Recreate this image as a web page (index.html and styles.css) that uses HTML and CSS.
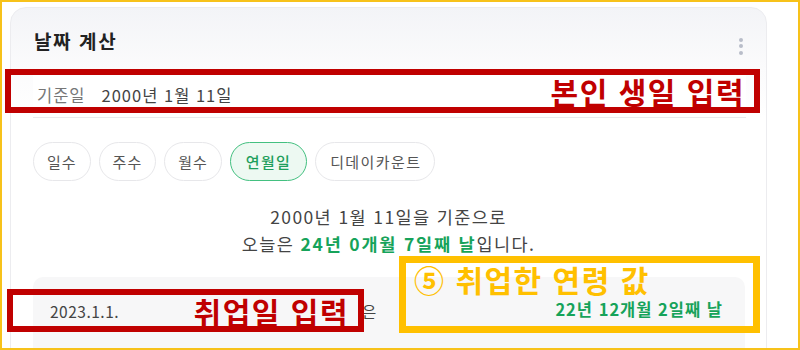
FILE: index.html
```html
<!DOCTYPE html>
<html lang="ko">
<head>
<meta charset="utf-8">
<link rel="stylesheet" href="styles.css">
</head>
<body>
<div class="frame">
  <div class="card">
    <div class="card-head">
      <h2 class="title">날짜 계산</h2>
      <span class="kebab"><i></i><i></i><i></i></span>
    </div>
    <div class="field">
      <span class="field-label">기준일</span>
      <span class="field-value">2000년 1월 11일</span>
    </div>
    <div class="chips">
      <span class="chip">일수</span>
      <span class="chip">주수</span>
      <span class="chip">월수</span>
      <span class="chip active">연월일</span>
      <span class="chip">디데이카운트</span>
    </div>
    <div class="result">
      <p>2000년 1월 11일을 기준으로</p>
      <p>오늘은 <b class="green">24년 0개월 7일째 날</b>입니다.</p>
    </div>
    <div class="sub">
      <div class="sub-row">
        <span class="sub-date">2023.1.1.</span>
        <span class="sub-eun">은</span>
        <b class="green sub-val">22년 12개월 2일째 날</b>
      </div>
    </div>
  </div>

  <div class="note red note-birth"><span>본인 생일 입력</span></div>
  <div class="note red note-job"><span>취업일 입력</span></div>
  <div class="note yellow note-age"><span>⑤ 취업한 연령 값</span></div>
</div>
</body>
</html>
```

FILE: styles.css
```css
* { box-sizing: border-box; }
html, body { margin: 0; padding: 0; background: #fff; }
body { font-family: "Noto Sans CJK KR", "Noto Sans", sans-serif; color: #333; }

.frame {
  position: relative;
  width: 800px;
  height: 350px;
  border: 2px solid #f7c21a;
  padding: 5px 0 0 8px;
  overflow: hidden;
  background: #fff;
}

.card {
  width: 757px;
  height: 400px;
  border: 1px solid #ececef;
  border-radius: 16px;
  background: linear-gradient(#f3f4f7 0px, #fbfbfc 60px, #ffffff 110px);
}

.card-head {
  display: flex;
  align-items: center;
  justify-content: space-between;
  height: 60px;
  padding: 4px 22px 0 23px;
}
.title {
  margin: 0;
  font-size: 19px;
  font-weight: 700;
  color: #222;
  letter-spacing: 1.6px;
}
.kebab {
  display: flex;
  flex-direction: column;
  gap: 2.5px;
  margin-top: 12px;
  margin-right: 1px;
}
.kebab i {
  display: block;
  width: 4px;
  height: 4px;
  border-radius: 50%;
  background: #b9bdc9;
}

.field {
  margin: 5px 20px 0 22px;
  height: 44px;
  display: flex;
  align-items: center;
  gap: 16px;
  padding-left: 4px;
  background: #fff;
  box-shadow: 0 1px 0 #e9e9ec;
  font-size: 16.5px;
  letter-spacing: 1px;
}
.field-label { color: #777; }
.field-value { color: #444; }

.chips {
  display: flex;
  gap: 8px;
  margin: 25px 0 0 22px;
}
.chip {
  height: 39px;
  padding: 0 13px;
  border: 1px solid #e7e7ea;
  border-radius: 20px;
  display: flex;
  align-items: center;
  font-size: 15px;
  letter-spacing: 1px;
  color: #555;
  background: #fff;
}
.chip.active {
  border: 1.5px solid #43c080;
  background: #edf9f2;
  color: #1e9f5c;
  font-weight: 500;
  padding: 0 15px;
  letter-spacing: 1.3px;
}
.chip:last-child { letter-spacing: 1.4px; padding: 0 13px 0 14px; }

.result {
  margin-top: 22px;
  text-align: center;
  font-size: 17.5px;
  line-height: 27px;
  letter-spacing: 1.4px;
  color: #444;
}
.result p { margin: 0; }
.result .green { letter-spacing: 1.8px; }
.green { color: #16a35a; font-weight: 700; }

.sub {
  margin: 20px 21px 0 22px;
  height: 90px;
  background: #f7f7f8;
  border-radius: 10px;
  padding: 21px 22px 0 17px;
}
.sub-row {
  display: flex;
  align-items: center;
  font-size: 15.5px;
  line-height: 18px;
  letter-spacing: 0.5px;
  color: #444;
}
.sub-date { width: 312px; margin-top: 4px; }
.sub-eun { margin-top: 4px; }
.sub-val { margin-left: auto; font-size: 16.5px; letter-spacing: 1px; }

.note {
  position: absolute;
  display: flex;
  align-items: center;
  justify-content: flex-end;
  font-weight: 700;
  font-size: 30px;
  letter-spacing: 1.5px;
  line-height: 1;
}
.note.red { border: 6px solid #c00000; color: #c00000; }
.note.yellow { border: 7px solid #ffc000; color: #ffc000; }

.note-birth { left: 3px; top: 67px; width: 755px; height: 44px; padding-right: 9px; }
.note-job { left: 5px; top: 287px; width: 357px; height: 43px; padding-right: 9px; }
.note-age {
  left: 397px; top: 254px; width: 361px; height: 77px;
  align-items: flex-start;
  justify-content: flex-start;
  padding: 1px 0 0 8px;
}
```
